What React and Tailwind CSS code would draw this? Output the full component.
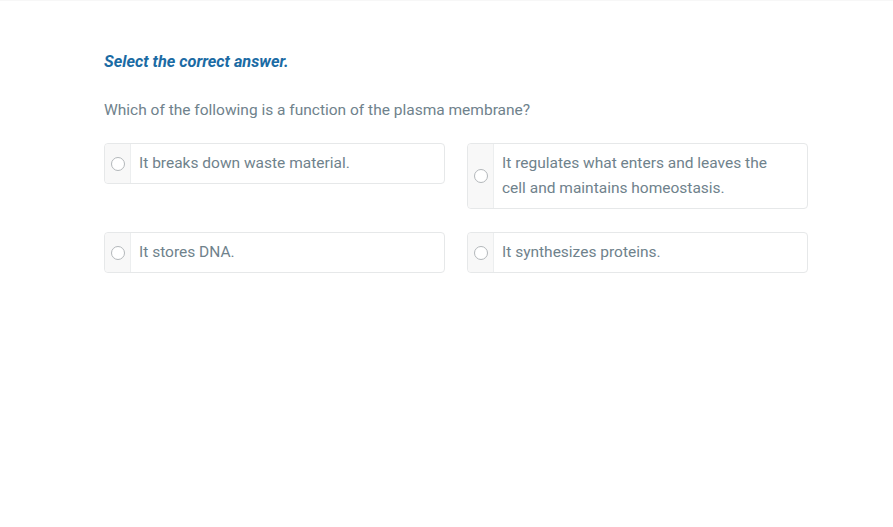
const options = [
  'It breaks down waste material.',
  'It regulates what enters and leaves the cell and maintains homeostasis.',
  'It stores DNA.',
  'It synthesizes proteins.',
];

function Option({ text }) {
  return (
    <label className="flex cursor-pointer rounded-[4px] border border-[#e6e8e9] bg-white">
      <span className="flex w-[26px] shrink-0 items-center justify-center rounded-l-[4px] border-r border-[#eceeef] bg-[#f8f8f8]">
        <span className="block h-[14px] w-[14px] rounded-full border border-[#b3b7ba] bg-white" />
      </span>
      <span className="py-[7px] pl-[8px] pr-[20px] text-[15.5px] leading-[25px] text-[#6f828c]">
        {text}
      </span>
    </label>
  );
}

export default function App() {
  return (
    <div
      className="min-h-[527px] border-t border-[#f7f7f7] bg-white"
      style={{ fontFamily: 'Roboto, "Noto Sans", sans-serif' }}
    >
      <div className="box-content w-[704px] pl-[104px] pt-[49px]">
        <p className="text-[16.3px] font-bold italic leading-[24px] text-[#1b6ba4]">
          Select the correct answer.
        </p>
        <p className="mt-[24px] text-[15.5px] leading-[24px] text-[#6f828c]">
          Which of the following is a function of the plasma membrane?
        </p>
        <div className="mt-[21px] grid grid-cols-2 items-start gap-x-[22px] gap-y-[23px]">
          {options.map((o) => (
            <Option key={o} text={o} />
          ))}
        </div>
      </div>
    </div>
  );
}
